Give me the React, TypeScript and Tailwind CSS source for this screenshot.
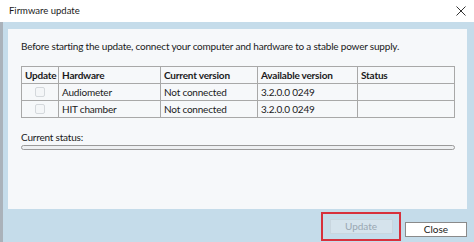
import React from "react";

const font = { fontFamily: 'Lato, "Noto Sans", sans-serif' };

function Check() {
  return <div className="mx-auto h-[10px] w-[10px] rounded-[2px] border border-[#d4d8dc] bg-[#f4f6f8]" />;
}

export default function App() {
  const rows = [
    { hw: "Audiometer", cur: "Not connected", avail: "3.2.0.0 0249" },
    { hw: "HIT chamber", cur: "Not connected", avail: "3.2.0.0 0249" },
  ];
  const cell = "border border-[#a8a8a8] px-[3px] text-left";
  return (
    <div className="flex h-[242px] w-[474px] flex-col overflow-hidden bg-white text-[#1a1a1a]" style={font}>
      <div className="flex h-[22px] shrink-0 items-center justify-between bg-white pl-[9px] pr-[6px]">
        <span className="text-[9.5px] leading-none">Firmware update</span>
        <svg width="12" height="12" viewBox="0 0 12 12" className="mr-[1px]">
          <path d="M1.5 1.5 L10.5 10.5 M10.5 1.5 L1.5 10.5" stroke="#333" strokeWidth="1" />
        </svg>
      </div>
      <div className="flex flex-1">
        <div className="w-[3px] bg-[#aab2ba]" />
        <div className="flex flex-1 flex-col bg-[#c5dcea] pl-[5px] pr-[7px] pt-[7px]">
          <div className="flex h-[180px] flex-col bg-[#f6f8fa] pl-[13px] pr-[12px] pt-[11px] text-[10px] leading-[12px] tracking-[-0.2px]">
            <div className="whitespace-nowrap">
              Before starting the update, connect your computer and hardware to a stable power supply.
            </div>
            <table className="mt-[14px] w-[434px] table-fixed border-collapse">
              <colgroup>
                <col className="w-[37px]" />
                <col className="w-[102px]" />
                <col className="w-[97px]" />
                <col className="w-[100px]" />
                <col />
              </colgroup>
              <thead>
                <tr className="h-[17px]">
                  <th className={cell + " font-bold"}>Update</th>
                  <th className={cell + " font-bold"}>Hardware</th>
                  <th className={cell + " font-bold"}>Current version</th>
                  <th className={cell + " font-bold"}>Available version</th>
                  <th className={cell + " font-bold"}>Status</th>
                </tr>
              </thead>
              <tbody>
                {rows.map((r) => (
                  <tr key={r.hw} className="h-[17px]">
                    <td className={cell}><Check /></td>
                    <td className={cell}>{r.hw}</td>
                    <td className={cell}>{r.cur}</td>
                    <td className={cell}>{r.avail}</td>
                    <td className={cell}></td>
                  </tr>
                ))}
              </tbody>
            </table>
            <div className="mt-[13px]">Current status:</div>
            <div className="mt-[2px] h-[5px] w-[434px] rounded-full border border-[#9a9a9a] bg-[#eef0f2]" />
          </div>
          <div className="flex flex-1 items-start justify-end pt-[3px] text-[10px]">
            <div className="mr-[4px] flex h-[29px] w-[80px] items-center justify-center border-2 border-[#d7303c]">
              <div className="flex h-[15px] w-[63px] items-center justify-center border border-[#c9d6df] bg-[#d5e3ec] text-[#9aa7b2]">
                Update
              </div>
            </div>
            <div className="mt-[10px] flex h-[15px] w-[62px] items-center justify-center border border-[#8a8a8a] bg-white">
              Close
            </div>
          </div>
        </div>
      </div>
    </div>
  );
}
